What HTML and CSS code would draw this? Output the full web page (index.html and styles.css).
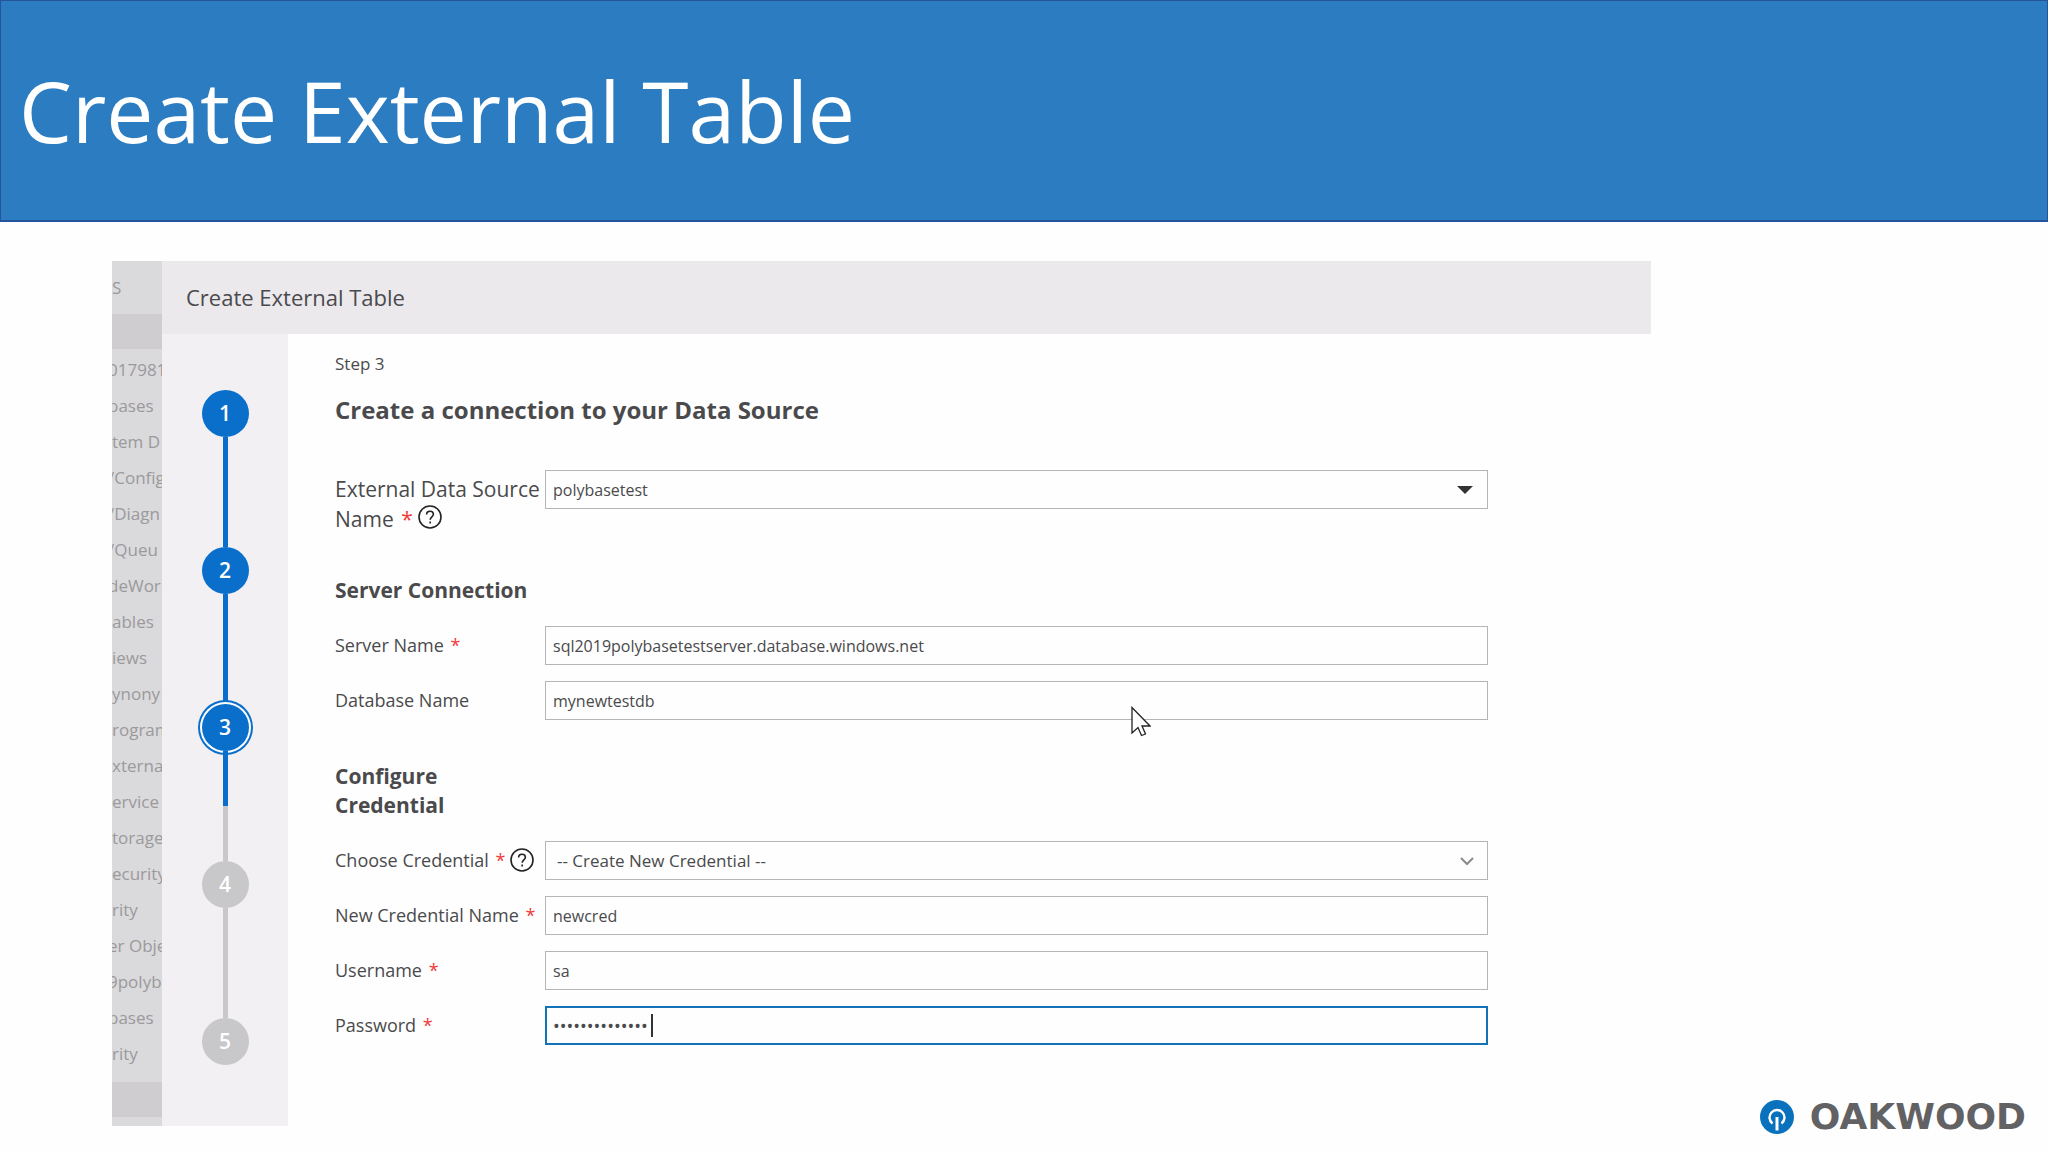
FILE: index.html
```html
<!DOCTYPE html>
<html lang="en">
<head>
    <meta charset="UTF-8">
    <meta name="viewport" content="width=device-width, initial-scale=1.0">
    <title>Create External Table</title>
    <link rel="stylesheet" href="styles.css">
</head>
<body>
    <header class="banner">
        <h1>Create External Table</h1>
    </header>

    <main class="slide">
        <div class="window">
            <!-- Object explorer, dimmed behind the wizard -->
            <aside class="explorer">
                <div class="explorer-title">S</div>
                <div class="explorer-bar"></div>
                <ul class="tree">
                    <li class="cut">017981</li>
                    <li class="cut">bases</li>
                    <li>tem D</li>
                    <li class="cut">/Config</li>
                    <li class="cut">/Diagn</li>
                    <li class="cut">/Queu</li>
                    <li class="cut">deWor</li>
                    <li>ables</li>
                    <li>iews</li>
                    <li>ynony</li>
                    <li>rogram</li>
                    <li>xterna</li>
                    <li>ervice</li>
                    <li>torage</li>
                    <li>ecurity</li>
                    <li>rity</li>
                    <li class="cut">er Obje</li>
                    <li class="cut">9polyb</li>
                    <li class="cut">bases</li>
                    <li>rity</li>
                </ul>
                <div class="explorer-bar"></div>
            </aside>

            <section class="wizard">
                <h2 class="wizard-title">Create External Table</h2>

                <ol class="steps">
                    <li class="step done"><span class="dot">1</span></li>
                    <li class="step done"><span class="dot">2</span></li>
                    <li class="step current"><span class="dot">3</span></li>
                    <li class="step"><span class="dot">4</span></li>
                    <li class="step"><span class="dot">5</span></li>
                </ol>

                <form class="content">
                    <p class="step-name">Step 3</p>
                    <h3>Create a connection to your Data Source</h3>

                    <div class="row">
                        <div class="label large">
                            <label for="dataSource">External Data Source Name <span class="req">*</span></label>
                            <button type="button" class="help" aria-label="Help">
                                <svg viewBox="0 0 24 24"><circle cx="12" cy="12" r="11"/><path d="M8.6 9.6C8.6 7.5 10 6.3 12 6.3s3.4 1.2 3.4 3c0 2.4-3.2 2.8-3.2 5.4"/><path d="M12.2 16.6v1.9"/></svg>
                            </button>
                        </div>
                        <div class="field">
                            <select id="dataSource">
                                <option>polybasetest</option>
                            </select>
                            <svg class="arrow" viewBox="0 0 16 16"><path d="M0 4h16L8 12z" fill="#333"/></svg>
                        </div>
                    </div>

                    <h4>Server Connection</h4>
                    <div class="rows">
                        <div class="row">
                            <label class="label" for="server">Server Name <span class="req">*</span></label>
                            <input type="text" id="server" value="sql2019polybasetestserver.database.windows.net">
                        </div>
                        <div class="row">
                            <label class="label" for="database">Database Name</label>
                            <input type="text" id="database" value="mynewtestdb">
                        </div>
                    </div>

                    <h4>Configure Credential</h4>
                    <div class="rows">
                        <div class="row">
                            <div class="label">
                                <label for="credential">Choose Credential <span class="req">*</span></label>
                                <button type="button" class="help" aria-label="Help">
                                    <svg viewBox="0 0 24 24"><circle cx="12" cy="12" r="11"/><path d="M8.6 9.6C8.6 7.5 10 6.3 12 6.3s3.4 1.2 3.4 3c0 2.4-3.2 2.8-3.2 5.4"/><path d="M12.2 16.6v1.9"/></svg>
                                </button>
                            </div>
                            <div class="field">
                                <select id="credential" class="inset">
                                    <option>-- Create New Credential --</option>
                                </select>
                                <svg class="arrow chevron" viewBox="0 0 16 16"><path d="M2 5l6 6 6-6" fill="none" stroke="#8a8a8a" stroke-width="2"/></svg>
                            </div>
                        </div>
                        <div class="row">
                            <label class="label" for="newCredential">New Credential Name <span class="req">*</span></label>
                            <input type="text" id="newCredential" value="newcred">
                        </div>
                        <div class="row">
                            <label class="label" for="username">Username <span class="req">*</span></label>
                            <input type="text" id="username" value="sa">
                        </div>
                        <div class="row">
                            <label class="label" for="password">Password <span class="req">*</span></label>
                            <div class="field">
                                <input type="password" id="password" class="active" value="polybasetest19">
                                <span class="caret"></span>
                            </div>
                        </div>
                    </div>
                </form>
            </section>
        </div>

        <div class="logo">
            <svg viewBox="0 0 34 34">
                <circle cx="17" cy="17" r="17" fill="#0a72bd"/>
                <path d="M12.5 23.5A7.5 7.5 0 1 1 21.5 23.5" fill="none" stroke="#fff" stroke-width="2.4"/>
                <path d="M17 17v13.5" stroke="#fff" stroke-width="3"/>
            </svg>
            <span>OAKWOOD</span>
        </div>
    </main>

    <svg class="cursor" viewBox="0 0 20 30"><path d="M1 1v25.5l6-5.5 3.5 8 4-1.5-3.5-8h8z" fill="#fff" stroke="#222" stroke-width="1.3"/></svg>
</body>
</html>
```
FILE: styles.css
```css
* {
    box-sizing: border-box;
}

body {
    margin: 0;
    min-height: 100vh;
    display: flex;
    flex-direction: column;
    font-family: "Open Sans", "Noto Sans", sans-serif;
    font-size: 17px;
    color: #4a4a4c;
    background-color: #fefefe;
}

h1, h2, h3, h4, p, ul, ol {
    margin: 0;
    padding: 0;
    font-weight: normal;
}

ul, ol {
    list-style: none;
}

.banner {
    height: 222px;
    padding-left: 18px;
    display: flex;
    align-items: center;
    background-color: #2b7cc0;
    border: 1px solid #24559a;
    border-bottom-width: 2px;
    color: white;
}

.banner h1 {
    font-size: 84px;
    line-height: 120px;
}

.slide {
    flex: 1;
    display: flex;
    align-items: flex-start;
    padding: 39px 22px 0 112px;
}

.window {
    flex: 1;
    display: grid;
    grid-template-columns: 50px 1fr;
}

/* Object explorer */
.explorer {
    overflow: hidden;
    background-color: #dad9db;
    color: #9a999b;
    font-size: 17px;
    white-space: nowrap;
}

.explorer-title {
    height: 53px;
    line-height: 53px;
}

.explorer-bar {
    height: 35px;
    background-color: #cfcdd0;
}

.tree {
    padding: 3px 0 10px;
}

.tree li {
    line-height: 36px;
}

.tree .cut {
    margin-left: -4px;
}

/* Wizard */
.wizard {
    display: grid;
    grid-template-columns: 126px 1fr;
    grid-template-rows: 73px auto;
}

.wizard-title {
    grid-column: 1 / 3;
    padding-left: 24px;
    background-color: #ebe9ec;
    font-size: 22px;
    line-height: 73px;
}

.steps {
    padding-top: 56px;
    background-color: #f2f0f3;
}

.step {
    height: 157px;
    display: flex;
    flex-direction: column;
    align-items: center;
}

.step::after {
    content: "";
    flex: 1;
    width: 5px;
    background-color: #c8c7c9;
}

.step:last-child {
    height: auto;
}

.step:last-child::after {
    display: none;
}

.dot {
    width: 47px;
    height: 47px;
    border-radius: 50%;
    background-color: #c8c7c9;
    color: white;
    font-size: 21px;
    font-weight: 600;
    line-height: 47px;
    text-align: center;
}

.done .dot, .current .dot, .done::after {
    background-color: #0a6fcb;
}

.current .dot {
    box-shadow: 0 0 0 2px white, 0 0 0 4px #0a6fcb;
}

.current::after {
    background: linear-gradient(#0a6fcb 50%, #c8c7c9 50%);
}

.content {
    padding: 18px 163px 81px 47px;
}

.step-name {
    line-height: 24px;
}

.content h3 {
    margin: 16px 0 42px;
    font-size: 24px;
    font-weight: bold;
    line-height: 36px;
}

.content h4 {
    width: 200px;
    margin: 42px 0 21px;
    font-size: 21px;
    font-weight: bold;
    line-height: 29px;
}

.rows {
    display: grid;
    gap: 16px;
}

.row {
    display: grid;
    grid-template-columns: 210px 1fr;
    align-items: start;
}

.label {
    height: 39px;
    font-size: 18px;
    line-height: 39px;
    white-space: nowrap;
}

.label.large {
    height: auto;
    padding-top: 4px;
    font-size: 21px;
    line-height: 30px;
    white-space: normal;
}

.req {
    margin-left: 2px;
    color: #f03a3a;
}

.help {
    width: 24px;
    height: 24px;
    padding: 0;
    border: none;
    background: none;
    vertical-align: text-top;
}

.help svg {
    display: block;
    overflow: visible;
    fill: none;
    stroke: #222;
    stroke-width: 1.6;
}

.field {
    position: relative;
}

input, select {
    width: 100%;
    height: 39px;
    padding: 0 7px;
    border: 1px solid #b5b4b6;
    border-radius: 0;
    background-color: #fefefe;
    color: #4a4a4c;
    font-family: inherit;
    font-size: 16px;
    appearance: none;
    outline: none;
    display: block;
}

select.inset {
    padding-left: 11px;
    font-size: 17px;
}

input.active {
    padding: 0 6px;
    border: 2px solid #1273b8;
    font-size: 18px;
}

.arrow {
    position: absolute;
    top: 12px;
    right: 15px;
    width: 16px;
    height: 16px;
    pointer-events: none;
}

.arrow.chevron {
    right: 13px;
}

.caret {
    position: absolute;
    top: 8px;
    left: 106px;
    width: 2px;
    height: 23px;
    background-color: #333;
}

/* Company logo */
.logo {
    width: 375px;
    align-self: flex-end;
    display: flex;
    justify-content: flex-end;
    align-items: center;
    gap: 16px;
    margin-bottom: 18px;
    color: #626164;
    font-family: "DejaVu Sans", sans-serif;
    font-size: 36px;
    font-weight: bold;
    line-height: 34px;
}

.logo svg {
    width: 34px;
    height: 34px;
}

/* Mouse pointer */
.cursor {
    position: absolute;
    left: 1131px;
    top: 706px;
    width: 20px;
    height: 31px;
}
```
